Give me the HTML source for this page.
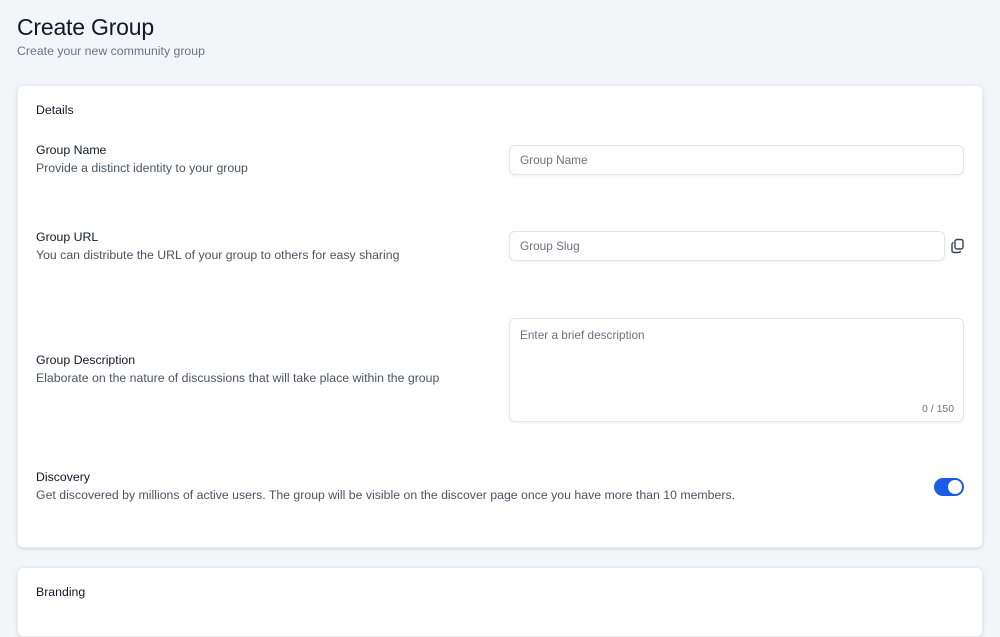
<!DOCTYPE html>
<html><head><style>
*{box-sizing:border-box;margin:0;padding:0}
body{width:1000px;height:618px;overflow:hidden;background:#f2f6f9;font-family:"Liberation Sans",sans-serif;position:relative}
.abs{position:absolute}
h1{position:absolute;left:17px;top:14px;font-size:23px;font-weight:400;color:#111827;letter-spacing:-0.2px}
.sub{left:17px;top:44px;font-size:12.3px;color:#6b7280}
.card{position:absolute;left:17px;width:966px;background:#fff;border-radius:6px;box-shadow:0 1px 3px rgba(0,0,0,.12);border:1px solid #e8ecef}
.t{font-size:12.3px;color:#111827}
.d{font-size:12.3px;color:#4b5563}
.in{position:absolute;border:1px solid #e2e5e9;border-radius:6px;box-shadow:0 1px 2px rgba(0,0,0,.06);font-size:11.8px;color:#6b7280;padding-left:10px}
</style></head><body>
<h1>Create Group</h1>
<div class="abs sub">Create your new community group</div>
<div class="card" style="top:85px;height:463px"></div>
<div class="card" style="top:567px;height:70px"></div>
<div class="abs t" style="left:36px;top:103px">Details</div>
<div class="abs t" style="left:36px;top:143px">Group Name</div>
<div class="abs d" style="left:36px;top:161px">Provide a distinct identity to your group</div>
<div class="in" style="left:509px;top:145px;width:455px;height:30px;line-height:28px">Group Name</div>
<div class="abs t" style="left:36px;top:230px">Group URL</div>
<div class="abs d" style="left:36px;top:248px">You can distribute the URL of your group to others for easy sharing</div>
<div class="in" style="left:509px;top:231px;width:436px;height:30px;line-height:28px">Group Slug</div>
<svg class="abs" style="left:950px;top:238px" width="15" height="16" viewBox="0 0 15 16" fill="none" stroke="#374151" stroke-width="1.4"><rect x="5" y="1.5" width="8" height="9.5" rx="2"/><path d="M3.5 4.5 Q2 5 2 6.5 V12.5 Q2 14.5 4 14.5 H8.5 Q10 14.5 10.5 13"/></svg>
<div class="abs t" style="left:36px;top:353px">Group Description</div>
<div class="abs d" style="left:36px;top:371px">Elaborate on the nature of discussions that will take place within the group</div>
<div class="in" style="left:509px;top:318px;width:455px;height:104px;padding-top:9px">Enter a brief description</div>
<div class="abs" style="left:922px;top:403px;font-size:10.5px;color:#6b7280">0 / 150</div>
<div class="abs t" style="left:36px;top:470px">Discovery</div>
<div class="abs d" style="left:36px;top:488px">Get discovered by millions of active users. The group will be visible on the discover page once you have more than 10 members.</div>
<div class="abs" style="left:934px;top:478px;width:30px;height:18px;border-radius:9px;background:#1a5ce6"><div class="abs" style="left:14px;top:2px;width:14px;height:14px;border-radius:50%;background:#fff"></div></div>
<div class="abs t" style="left:36px;top:585px">Branding</div>
</body></html>
